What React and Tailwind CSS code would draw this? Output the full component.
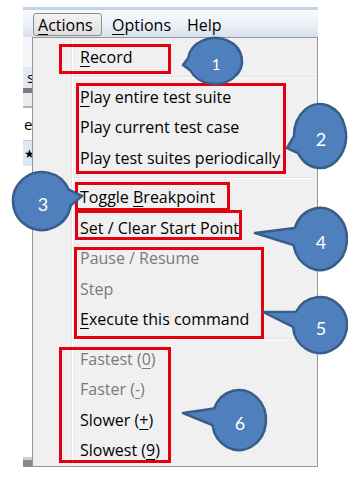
import React from 'react';

const U = ({ children }) => <span className="underline decoration-1 underline-offset-[3px]">{children}</span>;

const GROUPS = [
  [{ label: <><U>R</U>ecord</> }],
  [
    { label: <><U>P</U>lay entire test suite</> },
    { label: <>Play current test case</> },
    { label: <>Play test suites periodically</> },
  ],
  [
    { label: <>Toggle <U>B</U>reakpoint</> },
    { label: <><U>S</U>et / Clear Start Point</> },
    { label: <>Pause / Resume</>, disabled: true },
    { label: <>Step</>, disabled: true },
    { label: <><U>E</U>xecute this command</> },
  ],
  [
    { label: <>Fastest (<U>0</U>)</>, disabled: true },
    { label: <>Faster (<U>-</U>)</>, disabled: true },
    { label: <>Slower (<U>+</U>)</> },
    { label: <>Slowest (<U>9</U>)</> },
  ],
];

// annotation boxes drawn over the screenshot
const BOXES = [
  'left-[59px] top-[44px] w-[112px] h-[30px]',
  'left-[76px] top-[83px] w-[210px] h-[91px]',
  'left-[75px] top-[182px] w-[155px] h-[29px]',
  'left-[75px] top-[210px] w-[167px] h-[30px]',
  'left-[74px] top-[247px] w-[190px] h-[92px]',
  'left-[59px] top-[347px] w-[112px] h-[116px]',
];

const BUBBLES = [
  { n: 1, cx: 215, cy: 61, rx: 27, ry: 23, tx: 183, ty: 65 },
  { n: 2, cx: 320, cy: 136, rx: 26, ry: 32, tx: 287, ty: 148 },
  { n: 3, cx: 42, cy: 201, rx: 29, ry: 29, tx: 82, ty: 196 },
  { n: 4, cx: 320, cy: 239, rx: 27, ry: 31, tx: 255, ty: 233 },
  { n: 5, cx: 320, cy: 325, rx: 27, ry: 28, tx: 263, ty: 312 },
  { n: 6, cx: 239, cy: 420, rx: 27, ry: 30, tx: 183, ty: 413 },
];

function calloutPath({ cx, cy, rx, ry, tx, ty }) {
  const t = Math.atan2((ty - cy) / ry, (tx - cx) / rx);
  const d = 0.28;
  const p = (a) => `${cx + rx * Math.cos(a)} ${cy + ry * Math.sin(a)}`;
  return `M ${p(t + d)} A ${rx} ${ry} 0 1 1 ${p(t - d)} L ${tx} ${ty} Z`;
}

function Separator() {
  return (
    <div className="h-[9px] flex flex-col justify-center pr-[2px]">
      <div className="h-px bg-[#e0e0e0]" />
      <div className="h-px bg-white" />
    </div>
  );
}

function LeftStrip() {
  return (
    <div className="w-[9px] flex flex-col text-[15px] leading-none text-black overflow-hidden">
      <div className="h-[30px] bg-[#f3f5f9]" />
      <div className="h-[21px] bg-[#e1e9f5] flex items-center pl-[4px]">s</div>
      <div className="h-[5px] bg-[#7b7b7b]" />
      <div className="h-[13px] bg-[#ececec]" />
      <div className="h-[2px] bg-[#b4b4b4]" />
      <div className="h-[32px] bg-white flex items-center pl-[1px]">e</div>
      <div className="h-px bg-[#c3cddc]" />
      <div className="h-[25px] bg-[#dde7f5] flex items-center pl-[1px] text-[12px]">★</div>
      <div className="flex-1 bg-white" />
      <div className="h-[10px] bg-[#8a8a8a] border-t-[3px] border-[#cfcfcf]" />
    </div>
  );
}

export default function App() {
  return (
    <div className="relative w-[348px] h-[487px] bg-white overflow-hidden font-['Open_Sans',sans-serif]">
      <div className="pt-[7px] ml-[23px] w-[295px]">
        <div className="h-[3px] bg-[#c5d2e1]" />
        <div className="h-[27px] pt-[3px] pl-[10px] flex items-start text-[16px] text-black bg-gradient-to-b from-[#f7f9fc] via-[#eef2f8] to-[#d8e0ee]">
          <div className="h-[23px] w-[69px] rounded-[3px] border border-[#8e8e8e] bg-gradient-to-b from-[#f4f4f4] to-[#dedede] pl-[4px] flex items-center leading-none">
            <U>A</U>ctions
          </div>
          <div className="h-[23px] ml-[10px] flex items-center leading-none"><U>O</U>ptions</div>
          <div className="h-[23px] ml-[16px] flex items-center leading-none">Help</div>
        </div>
        <div className="flex">
          <LeftStrip />
          <div className="w-[286px] h-[430px] border border-[#979797] bg-[#f0f0f0] flex">
            <div className="w-[39px] border-r border-[#e2e3e3]" />
            <div className="w-px bg-white" />
            <div className="flex-1 pt-[4px] text-[16px] leading-[30.5px]">
              {GROUPS.map((group, gi) => (
                <div key={gi}>
                  {gi > 0 && <Separator />}
                  {group.map((item, i) => (
                    <div
                      key={i}
                      className={`h-[30.5px] pl-[7px] whitespace-nowrap ${item.disabled ? 'text-[#7a7a7a]' : 'text-black'}`}
                    >
                      {item.label}
                    </div>
                  ))}
                </div>
              ))}
            </div>
          </div>
        </div>
      </div>

      {BOXES.map((b, i) => (
        <div key={i} className={`absolute border-[3px] border-[#e3000f] ${b}`} />
      ))}

      <svg className="absolute inset-0 pointer-events-none" width="348" height="487">
        {BUBBLES.map((b) => (
          <g key={b.n}>
            <path d={calloutPath(b)} fill="#4f7fbd" stroke="#385d8a" strokeWidth="2.5" strokeLinejoin="round" />
            <text
              x={b.cx + 1}
              y={b.cy + 3}
              fill="white"
              fontSize={b.n === 1 ? 15 : 18}
              fontFamily="Lato, 'Liberation Sans', sans-serif"
              textAnchor="middle"
              dominantBaseline="central"
            >
              {b.n}
            </text>
          </g>
        ))}
      </svg>
    </div>
  );
}
